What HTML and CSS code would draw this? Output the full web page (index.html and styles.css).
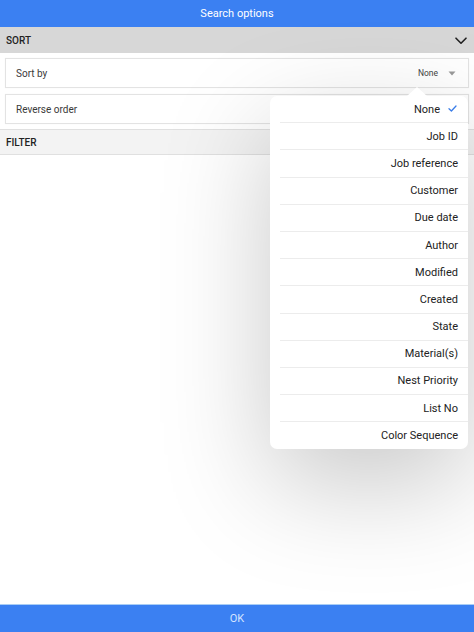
FILE: index.html
```html
<!DOCTYPE html>
<html>
<head>
<meta charset="utf-8">
<link rel="stylesheet" href="styles.css">
</head>
<body>
<div class="app">
  <header class="topbar">Search options</header>
  <main class="content">
    <div class="section-head sort-head">
      <span>SORT</span>
      <svg class="chev" width="12" height="8" viewBox="0 0 12 8"><path d="M1 1.2 L6 6.2 L11 1.2" fill="none" stroke="#222" stroke-width="1.6" stroke-linecap="round" stroke-linejoin="round"/></svg>
    </div>
    <div class="rows">
      <div class="row">
        <span class="label">Sort by</span>
        <span class="value">None <svg class="caret" width="8" height="5" viewBox="0 0 8 5"><path d="M0.5 0.5 H7.5 L4 4.5 Z" fill="#9a9a9a"/></svg></span>
      </div>
      <div class="row">
        <span class="label">Reverse order</span>
      </div>
    </div>
    <div class="section-head filter-head"><span>FILTER</span></div>
  </main>
  <footer class="okbar">OK</footer>

  <div class="popover">
    <div class="arrow"></div>
    <ul class="menu">
      <li class="item selected">None <svg class="check" width="9" height="7" viewBox="0 0 9 7"><path d="M1 3.8 L3.4 6 L8 1" fill="none" stroke="#3a7de8" stroke-width="1.3" stroke-linecap="round" stroke-linejoin="round"/></svg></li>
      <li class="item">Job ID</li>
      <li class="item">Job reference</li>
      <li class="item">Customer</li>
      <li class="item">Due date</li>
      <li class="item">Author</li>
      <li class="item">Modified</li>
      <li class="item">Created</li>
      <li class="item">State</li>
      <li class="item">Material(s)</li>
      <li class="item">Nest Priority</li>
      <li class="item">List No</li>
      <li class="item">Color Sequence</li>
    </ul>
  </div>
</div>
</body>
</html>
```

FILE: styles.css
```css
* { box-sizing: border-box; }
html, body { margin: 0; padding: 0; }
body {
  width: 474px;
  height: 632px;
  overflow: hidden;
  font-family: Roboto, "Liberation Sans", Arial, sans-serif;
  color: #2a2a2a;
  background: #fff;
}
.app {
  position: relative;
  width: 474px;
  height: 632px;
  display: flex;
  flex-direction: column;
}
.topbar {
  height: 27px;
  background: #3b80f2;
  color: #fff;
  font-size: 11px;
  display: flex;
  align-items: center;
  justify-content: center;
}
.content {
  flex: 1;
  background: #fff;
}
.section-head {
  display: flex;
  align-items: center;
  justify-content: space-between;
  padding: 0 7px 0 6px;
  font-size: 10px;
  font-weight: 500;
  color: #222;
}
.sort-head {
  height: 26px;
  background: #d7d7d7;
}
.chev { margin-top: 1px; }
.rows {
  padding: 5px 5px 0 5px;
  display: flex;
  flex-direction: column;
  gap: 6px;
}
.row {
  height: 30px;
  border: 1px solid #e3e3e3;
  background: #fff;
  display: flex;
  align-items: center;
  justify-content: space-between;
  padding: 0 10px;
  font-size: 10px;
  color: #3a3a3a;
  box-shadow: 0 0 1px rgba(0,0,0,0.05);
}
.value {
  display: flex;
  align-items: center;
  gap: 10px;
  font-size: 8.5px;
  color: #444;
  padding-right: 2px;
}
.filter-head {
  margin-top: 5px;
  height: 26px;
  background: #f3f3f3;
  border-top: 1px solid #e0e0e0;
  border-bottom: 1px solid #e0e0e0;
}
.okbar {
  height: 28px;
  background: #3b80f2;
  border-top: 1px solid #a9cdf5;
  color: #d4e4ff;
  font-size: 11px;
  display: flex;
  align-items: center;
  justify-content: center;
}
.popover {
  position: absolute;
  left: 270px;
  top: 96px;
  width: 198px;
  background: #fff;
  border-radius: 7px;
  box-shadow: 0 35px 110px rgba(0,0,0,0.22);
}
.arrow {
  position: absolute;
  top: -9px;
  left: 137px;
  width: 0;
  height: 0;
  border-left: 10px solid transparent;
  border-right: 10px solid transparent;
  border-bottom: 9px solid #fff;
}
.menu {
  list-style: none;
  margin: 0;
  padding: 0 0 0 10px;
}
.item {
  height: 27.2px;
  display: flex;
  align-items: center;
  justify-content: flex-end;
  padding-right: 10px;
  font-size: 11px;
  color: #222;
  border-bottom: 1px solid #ececec;
}
.item:last-child { border-bottom: none; }
.item.selected { gap: 8px; padding-right: 11px; }
.check { margin-bottom: 1px; }
```
